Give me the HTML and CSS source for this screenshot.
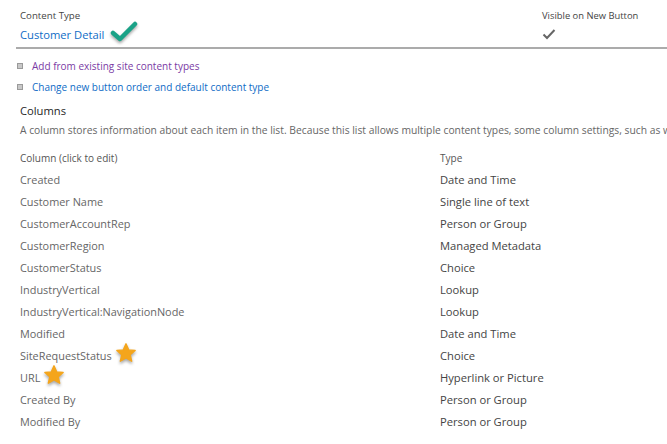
FILE: index.html
```html
<!DOCTYPE html>
<html>
<head>
<meta charset="utf-8">
<link rel="stylesheet" href="styles.css">
</head>
<body>
<div class="page">
  <div class="ct-table">
    <div class="ct-head">
      <div class="ct-col1">
        <div class="label">Content Type</div>
        <div class="ct-name"><a class="link">Customer Detail</a>
          <svg class="green-check" width="30" height="24" viewBox="0 0 30 24"><path d="M4 13 L11 19 L26 4" fill="none" stroke="#1aa287" stroke-width="4.5" stroke-linecap="round" stroke-linejoin="round"/></svg>
        </div>
      </div>
      <div class="ct-col2">
        <div class="label">Visible on New Button</div>
        <svg class="grey-check" width="14" height="12" viewBox="0 0 14 12"><path d="M1.5 6.5 L5 10 L12.5 2" fill="none" stroke="#666" stroke-width="2"/></svg>
      </div>
    </div>
  </div>
  <ul class="actions">
    <li><span class="bullet"></span><a class="link visited">Add from existing site content types</a></li>
    <li><span class="bullet"></span><a class="link">Change new button order and default content type</a></li>
  </ul>
  <h2 class="section-title">Columns</h2>
  <p class="desc">A column stores information about each item in the list. Because this list allows multiple content types, some column settings, such as wheth</p>
  <div class="cols">
    <div class="hdr">Column (click to edit)</div><div class="hdr">Type</div>
    <div class="name">Created</div><div class="type">Date and Time</div>
    <div class="name">Customer Name</div><div class="type">Single line of text</div>
    <div class="name">CustomerAccountRep</div><div class="type">Person or Group</div>
    <div class="name">CustomerRegion</div><div class="type">Managed Metadata</div>
    <div class="name">CustomerStatus</div><div class="type">Choice</div>
    <div class="name">IndustryVertical</div><div class="type">Lookup</div>
    <div class="name">IndustryVertical:NavigationNode</div><div class="type">Lookup</div>
    <div class="name">Modified</div><div class="type">Date and Time</div>
    <div class="name">SiteRequestStatus <svg class="star" width="22" height="22" viewBox="0 0 24 24"><path d="M12 2 L14.9 8.6 L22 9.3 L16.6 14 L18.2 21 L12 17.3 L5.8 21 L7.4 14 L2 9.3 L9.1 8.6 Z" fill="#f4a51c" stroke="#f4a51c" stroke-width="1.5" stroke-linejoin="round"/></svg></div><div class="type">Choice</div>
    <div class="name">URL <svg class="star" width="22" height="22" viewBox="0 0 24 24"><path d="M12 2 L14.9 8.6 L22 9.3 L16.6 14 L18.2 21 L12 17.3 L5.8 21 L7.4 14 L2 9.3 L9.1 8.6 Z" fill="#f4a51c" stroke="#f4a51c" stroke-width="1.5" stroke-linejoin="round"/></svg></div><div class="type">Hyperlink or Picture</div>
    <div class="name">Created By</div><div class="type">Person or Group</div>
    <div class="name">Modified By</div><div class="type">Person or Group</div>
  </div>
</div>
</body>
</html>
```

FILE: styles.css
```css
html, body {
  margin: 0;
  padding: 0;
  background: #fff;
  overflow: hidden;
}
body {
  font-family: "Open Sans", "Noto Sans", sans-serif;
  color: #444;
  width: 667px;
  height: 444px;
}
.page {
  padding: 8px 0 0 16px;
  white-space: nowrap;
}
.ct-head {
  display: flex;
  border-bottom: 2px solid #ababab;
  padding-left: 4px;
  height: 39px;
}
.ct-col1 {
  width: 522px;
}
.label {
  font-size: 9.7px;
  color: #444;
  line-height: 15px;
}
.ct-col2 .label {
  font-size: 9.4px;
}
.ct-name {
  display: flex;
  align-items: center;
  height: 23px;
}
.link {
  color: #0f6cc6;
  font-size: 10px;
}
.ct-name .link {
  font-size: 11.2px;
}
.link.visited {
  color: #7a3aa4;
}
.green-check {
  margin-left: 5px;
  margin-top: -6px;
  filter: drop-shadow(0 2px 1.5px rgba(0,0,0,0.35));
}
.grey-check {
  display: block;
  margin-top: 5px;
  margin-left: 0;
}
.actions {
  list-style: none;
  margin: 0;
  padding: 6px 0 0 0;
}
.actions li {
  display: flex;
  align-items: center;
  height: 21px;
}
.bullet {
  width: 4px;
  height: 4px;
  background: #c8c8c8;
  border: 1px solid #9a9a9a;
  margin: 0 9px 0 1px;
}
.section-title {
  font-size: 11.2px;
  font-weight: normal;
  color: #262626;
  margin: 5px 0 0 4px;
  line-height: 18px;
}
.desc {
  margin: 1px 0 0 4px;
  font-size: 10.3px;
  color: #666;
  line-height: 18px;
}
.cols {
  display: grid;
  grid-template-columns: 420px auto;
  margin: 8px 0 0 4px;
}
.hdr {
  font-size: 10px;
  color: #555;
  height: 22px;
  line-height: 22px;
}
.name, .type {
  font-size: 11.2px;
  height: 22px;
  line-height: 22px;
  display: flex;
  align-items: center;
}
.name { color: #666; font-size: 10.9px; }
.type { color: #444; }
.star {
  margin-left: 3px;
  margin-top: -6px;
  filter: drop-shadow(0 2px 1.5px rgba(0,0,0,0.35));
}
```
